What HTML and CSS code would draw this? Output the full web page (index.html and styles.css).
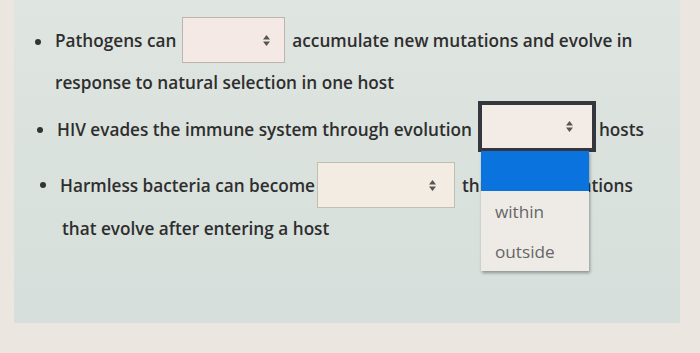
FILE: index.html
```html
<!DOCTYPE html>
<html lang="en">
<head>
    <meta charset="UTF-8">
    <title>Evolution of pathogens</title>
    <link rel="stylesheet" href="styles.css">
</head>
<body>
    <div class="panel">
        <div class="item item-1">
            <div class="line">
                <span class="bullet"></span>
                <span>Pathogens can</span>
                <span class="select select-1">
                    <svg class="arrows" viewBox="0 0 7 11"><path d="M0 4.5 L3.5 0 L7 4.5 Z M0 6.5 L7 6.5 L3.5 11 Z"/></svg>
                </span>
                <span>accumulate new mutations and evolve in</span>
            </div>
            <div class="line cont">response to natural selection in one host</div>
        </div>

        <div class="item item-2">
            <div class="line">
                <span class="bullet"></span>
                <span class="low">HIV evades the immune system through evolution</span>
                <span class="select select-2 open">
                    <svg class="arrows" viewBox="0 0 7 11"><path d="M0 4.5 L3.5 0 L7 4.5 Z M0 6.5 L7 6.5 L3.5 11 Z"/></svg>
                    <!-- opened list -->
                    <span class="menu">
                        <span class="opt active"></span>
                        <span class="opt">within</span>
                        <span class="opt">outside</span>
                    </span>
                </span>
                <span class="low">hosts</span>
            </div>
        </div>

        <div class="item item-3">
            <div class="line">
                <span class="bullet"></span>
                <span>Harmless bacteria can become</span>
                <span class="select select-3">
                    <svg class="arrows" viewBox="0 0 7 11"><path d="M0 4.5 L3.5 0 L7 4.5 Z M0 6.5 L7 6.5 L3.5 11 Z"/></svg>
                </span>
                <span>through adaptations</span>
            </div>
            <div class="line cont">that evolve after entering a host</div>
        </div>
    </div>
</body>
</html>
```

FILE: styles.css
```css
body {
    margin: 0;
    width: 700px;
    height: 353px;
    overflow: hidden;
    background: #ebe6e0;
    font-family: "Open Sans", "Liberation Sans", sans-serif;
    font-weight: 600;
    font-size: 17.2px;
    color: #2e2e2e;
}

.panel {
    margin-left: 14px;
    width: 666px;
    height: 306px;
    padding-top: 17px;
    background: linear-gradient(180deg, #dfe5e1, #d6dfdb);
}

.line {
    display: flex;
    align-items: center;
    height: 46px;
    white-space: nowrap;
}

.cont {
    height: 38px;
    padding-left: 20px;
}

.bullet {
    width: 6px;
    height: 6px;
    border-radius: 50%;
    background: #333;
    margin-right: 14px;
    flex-shrink: 0;
}

.item-1 {
    padding-left: 21px;
}

.item-1 .bullet {
    margin-top: 4px;
}

.item-2 {
    padding-left: 23px;
}

.item-2 .line {
    height: 51px;
}

.item-2 .bullet {
    margin-top: 7px;
}

.low {
    padding-top: 6px;
}

.item-3 {
    padding-left: 26px;
    margin-top: 10px;
}

.item-3 .cont {
    height: 40px;
    padding-left: 22px;
}

/* 下拉框 */
.select {
    position: relative;
    display: flex;
    align-items: center;
    justify-content: flex-end;
    box-sizing: border-box;
    height: 46px;
    margin: 0 7px 0 6px;
    border: 1px solid #bcb4ae;
    background: #f4e9e4;
    flex-shrink: 0;
}

.select-1 {
    width: 103px;
    padding-right: 14px;
}

.select-2 {
    width: 118px;
    height: 51px;
    margin: 0 3px 0 6px;
    border: 4px solid #36363e;
    background: #f3ece6;
    padding-right: 19px;
}

.select-3 {
    width: 138px;
    margin-left: 2px;
    padding-right: 18px;
    background: #f2ece3;
    border-color: #c4bdb3;
}

.arrows {
    width: 7px;
    height: 11px;
    fill: #555;
}

.menu {
    position: absolute;
    top: calc(100% + 3px);
    left: -1px;
    width: 108px;
    background: #eeebe6;
    box-shadow: 1px 2px 3px rgba(0, 0, 0, 0.35);
    z-index: 10;
}

.opt {
    display: flex;
    align-items: center;
    height: 40px;
    padding-left: 14px;
    font-weight: 400;
    color: #666;
}

.opt.active {
    background: #0b73de;
}
```
